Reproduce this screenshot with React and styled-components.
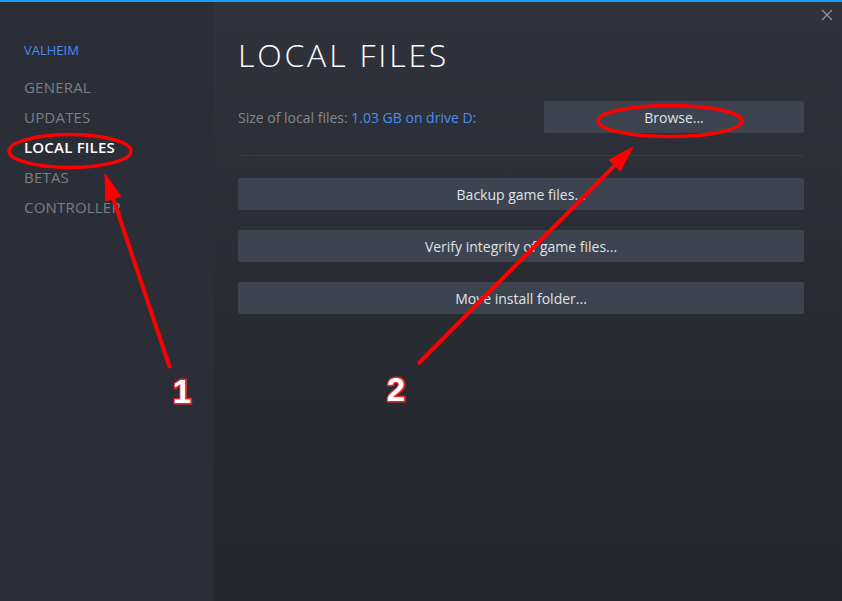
import React from 'react';
import styled, { createGlobalStyle } from 'styled-components';

const GlobalStyle = createGlobalStyle`
  html, body {
    margin: 0;
    padding: 0;
    background: #2b2e36;
  }
  #root {
    width: 842px;
    height: 601px;
  }
`;

const Window = styled.div`
  position: relative;
  display: flex;
  width: 842px;
  height: 601px;
  overflow: hidden;
  border-top: 2px solid #1a9fff;
  box-sizing: border-box;
  font-family: 'Open Sans', 'Noto Sans', Arial, sans-serif;
`;

const Sidebar = styled.nav`
  width: 214px;
  flex-shrink: 0;
  background: #2b2e36;
  padding: 40px 0 0 24px;
  box-sizing: border-box;
  display: flex;
  flex-direction: column;
`;

const GameName = styled.div`
  color: #4a8cf2;
  font-size: 13px;
  line-height: 16px;
  margin-bottom: 14px;
`;

const NavItem = styled.div`
  font-size: 15px;
  line-height: 30px;
  letter-spacing: 0.2px;
  color: ${(p) => (p.active ? '#ffffff' : '#7b7e84')};
  font-weight: ${(p) => (p.active ? 600 : 400)};
`;

const Main = styled.main`
  flex: 1;
  background: linear-gradient(180deg, #30333b 0%, #272a31 60%, #24272e 100%);
  padding: 0 38px 0 24px;
  display: flex;
  flex-direction: column;
`;

const Title = styled.h1`
  margin: 33px 0 0;
  font-size: 32px;
  line-height: 40px;
  font-weight: 300;
  letter-spacing: 2.8px;
  color: #ffffff;
`;

const SizeRow = styled.div`
  display: flex;
  align-items: center;
  justify-content: space-between;
  margin-top: 26px;
`;

const SizeText = styled.div`
  font-size: 14px;
  color: #84878c;
`;

const SizeValue = styled.span`
  color: #4a8cf2;
`;

const Separator = styled.div`
  height: 1px;
  background: #363a43;
  margin: 22px 0 22px;
`;

const ActionList = styled.div`
  display: flex;
  flex-direction: column;
  gap: 20px;
`;

const Button = styled.button`
  width: ${(p) => p.width || '100%'};
  height: 32px;
  border: none;
  border-radius: 2px;
  background: #3d4450;
  color: #dfe3e8;
  font-family: inherit;
  font-size: 14px;
  padding: 0;
  cursor: pointer;
`;

const CloseButton = styled.button`
  position: absolute;
  top: 4px;
  right: 6px;
  width: 18px;
  height: 18px;
  border: none;
  background: transparent;
  padding: 0;
  display: flex;
  align-items: center;
  justify-content: center;
`;

const Annotations = styled.svg`
  position: absolute;
  inset: 0;
  pointer-events: none;
`;

const navItems = ['GENERAL', 'UPDATES', 'LOCAL FILES', 'BETAS', 'CONTROLLER'];
const actions = ['Backup game files...', 'Verify integrity of game files...', 'Move install folder...'];

function Arrow({ x1, y1, x2, y2 }) {
  const dx = x2 - x1;
  const dy = y2 - y1;
  const len = Math.hypot(dx, dy);
  const ux = dx / len;
  const uy = dy / len;
  const bx = x2 - ux * 26;
  const by = y2 - uy * 26;
  const px = -uy * 8;
  const py = ux * 8;
  return (
    <g fill='#ff0000' stroke='#ff0000'>
      <line x1={x1} y1={y1} x2={bx + ux * 4} y2={by + uy * 4} strokeWidth='4' />
      <polygon points={`${x2},${y2} ${bx + px},${by + py} ${bx - px},${by - py}`} strokeWidth='1' />
    </g>
  );
}

function Badge({ x, y, children }) {
  return (
    <text
      x={x}
      y={y}
      fontFamily="'Liberation Sans', Arial, sans-serif"
      fontWeight='700'
      fontSize='33'
      fill='#ffffff'
      stroke='#e8242a'
      strokeWidth='3'
      paintOrder='stroke'
      textAnchor='middle'
    >
      {children}
    </text>
  );
}

export default function App() {
  return (
    <>
      <GlobalStyle />
      <Window>
        <Sidebar>
          <GameName>VALHEIM</GameName>
          {navItems.map((item) => (
            <NavItem key={item} active={item === 'LOCAL FILES'}>
              {item}
            </NavItem>
          ))}
        </Sidebar>

        <Main>
          <Title>LOCAL FILES</Title>
          <SizeRow>
            <SizeText>
              Size of local files: <SizeValue>1.03 GB on drive D:</SizeValue>
            </SizeText>
            <Button width='260px'>Browse...</Button>
          </SizeRow>
          <Separator />
          <ActionList>
            {actions.map((label) => (
              <Button key={label}>{label}</Button>
            ))}
          </ActionList>
        </Main>

        <CloseButton aria-label='Close'>
          <svg width='12' height='12' viewBox='0 0 12 12'>
            <path d='M1 1L11 11M11 1L1 11' stroke='#8b8f95' strokeWidth='1.4' />
          </svg>
        </CloseButton>

        <Annotations width='842' height='601' viewBox='0 -2 842 601'>
          <ellipse cx='70' cy='147' rx='61' ry='16.5' fill='none' stroke='#ff0000' strokeWidth='3.5' />
          <ellipse cx='670' cy='117' rx='72' ry='15.5' fill='none' stroke='#ff0000' strokeWidth='3.5' />
          <Arrow x1={170} y1={364} x2={105} y2={170} />
          <Arrow x1={418} y1={360} x2={633} y2={143} />
          <Badge x={182} y={399}>1</Badge>
          <Badge x={396} y={397}>2</Badge>
        </Annotations>
      </Window>
    </>
  );
}
